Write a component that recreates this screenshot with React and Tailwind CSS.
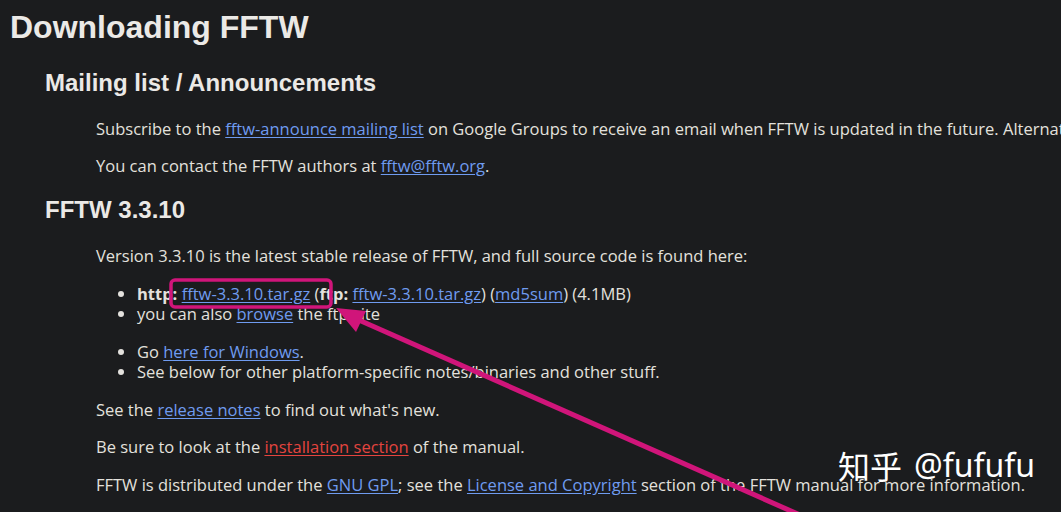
export default function App() {
  const body = { fontFamily: '"Open Sans", "Noto Sans", sans-serif' };
  const head = { fontFamily: '"Liberation Sans", Arial, sans-serif' };
  const A = ({ children, red }) => (
    <a className={`underline underline-offset-2 ${red ? 'text-[#e4443f] decoration-[#e4443f]' : 'text-[#6f9bf0] decoration-[#6f9bf0]'}`}>{children}</a>
  );
  return (
    <div className="relative w-[1061px] h-[512px] overflow-hidden bg-[#1b1c1e] text-[#e3e1dd]">
      <h1 style={head} className="pt-[7px] pl-[10px] text-[32px] leading-[40px] font-bold text-[#ebe9e6]">Downloading FFTW</h1>
      <div className="pl-[45px]">
        <h2 style={head} className="mt-[20px] text-[24px] leading-[32px] font-bold text-[#ebe9e6]">Mailing list / Announcements</h2>
      </div>
      <div style={body} className="pl-[96px] text-[16.5px] leading-[24px] whitespace-nowrap">
        <p className="mt-[18px]">Subscribe to the <A>fftw-announce mailing list</A> on Google Groups to receive an email when FFTW is updated in the future. Alternatively, subscribe</p>
        <p className="mt-[13px]">You can contact the FFTW authors at <A>fftw@fftw.org</A>.</p>
      </div>
      <div className="pl-[45px]">
        <h2 style={head} className="mt-[16px] text-[24px] leading-[32px] font-bold text-[#ebe9e6]">FFTW 3.3.10</h2>
      </div>
      <div style={body} className="pl-[96px] text-[16.5px] leading-[24px] whitespace-nowrap">
        <p className="mt-[18px]">Version 3.3.10 is the latest stable release of FFTW, and full source code is found here:</p>
        <ul className="mt-[16px] list-disc pl-[41px] leading-[20px]">
          <li><b>http:</b> <A>fftw-3.3.10.tar.gz</A> (<b>ftp:</b> <A>fftw-3.3.10.tar.gz</A>) (<A>md5sum</A>) (4.1MB)</li>
          <li>you can also <A>browse</A> the ftp site</li>
        </ul>
        <ul className="mt-[18px] list-disc pl-[41px] leading-[20px]">
          <li>Go <A>here for Windows</A>.</li>
          <li>See below for other platform-specific notes/binaries and other stuff.</li>
        </ul>
        <p className="mt-[16px]">See the <A>release notes</A> to find out what's new.</p>
        <p className="mt-[13px]">Be sure to look at the <A red>installation section</A> of the manual.</p>
        <p className="mt-[14px]">FFTW is distributed under the <A>GNU GPL</A>; see the <A>License and Copyright</A> section of the FFTW manual for more information.</p>
      </div>

      <svg className="absolute left-0 top-0" width="1061" height="512" viewBox="0 0 1061 512">
        <rect x="171" y="280" width="160" height="27" rx="4" fill="none" stroke="#d0157a" strokeWidth="3.5" />
        <line x1="352" y1="317" x2="800" y2="515" stroke="#d0157a" strokeWidth="5" />
        <polygon points="336,308 366,311 356,332" fill="#d0157a" />
      </svg>

      <div className="absolute left-[838px] top-[445px] flex items-center text-white text-[32px] leading-[40px]" style={{ fontFamily: '"Noto Sans", "Noto Sans CJK SC", sans-serif' }}>
        <span style={{ fontFamily: '"Noto Sans CJK SC", sans-serif' }}>知乎</span>
        <span className="ml-[12px]">@fufufu</span>
      </div>
    </div>
  );
}
